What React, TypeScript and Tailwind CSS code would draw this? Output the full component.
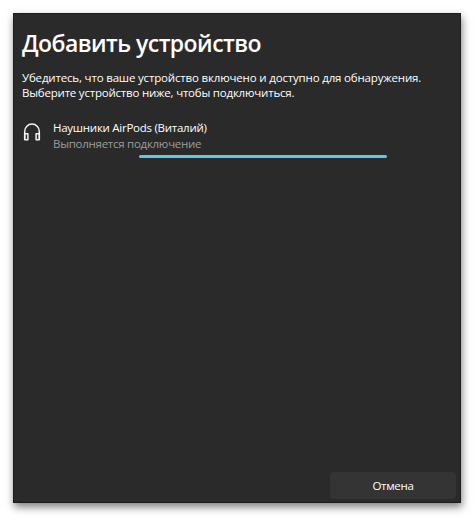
const device = {
  name: 'Наушники AirPods (Виталий)',
  status: 'Выполняется подключение',
};

function HeadphonesIcon() {
  return (
    <svg className="h-[18px] w-[18px] shrink-0" viewBox="0 0 18 18" fill="none" stroke="#f2f2f2" strokeWidth="1.5" strokeLinejoin="round">
      <path d="M1.7 16.6V8.4a7.3 7.3 0 0 1 14.6 0v8.2" />
      <path d="M1.7 10.7h3.2v6H1.7zM13.1 10.7h3.2v6h-3.2z" />
    </svg>
  );
}

export default function App() {
  return (
    <div className="h-[517px] w-[474px] overflow-hidden bg-white px-[13px] pt-[13px] font-['Open_Sans','Noto_Sans',sans-serif]">
      <div className="flex h-[490px] w-[448px] flex-col border border-[#1c1c1c] bg-[#2a2a2a] shadow-[1px_4px_8px_rgba(0,0,0,0.5)]">
        <h1 className="ml-2 mt-[13px] whitespace-nowrap text-[23px] font-semibold leading-[32px] tracking-[-0.56px] text-white">
          Добавить устройство
        </h1>
        <div className="ml-2 mt-[11px] whitespace-nowrap text-[11.5px] leading-[15px] text-white">
          <p className="tracking-[-0.17px]">Убедитесь, что ваше устройство включено и доступно для обнаружения.</p>
          <p className="tracking-[-0.21px]">Выберите устройство ниже, чтобы подключиться.</p>
        </div>

        <div className="ml-[9px] mt-5 flex gap-[12px]">
          <div className="pt-[3px]">
            <HeadphonesIcon />
          </div>
          <div className="whitespace-nowrap text-[11.5px] leading-4">
            <div className="tracking-[-0.26px] text-white">{device.name}</div>
            <div className="tracking-[-0.27px] text-[#9c9c9c]">{device.status}</div>
          </div>
        </div>
        <div className="ml-[125px] mt-[3px] h-[3px] w-[248px] rounded-full bg-[#5fc8ea]" />

        <button
          type="button"
          className="mb-[3px] mr-1 mt-auto flex h-[27px] w-[126px] items-center justify-center self-end rounded-[4px] bg-[#343434] text-[11.5px] tracking-[-0.3px] text-white"
        >
          Отмена
        </button>
      </div>
    </div>
  );
}
